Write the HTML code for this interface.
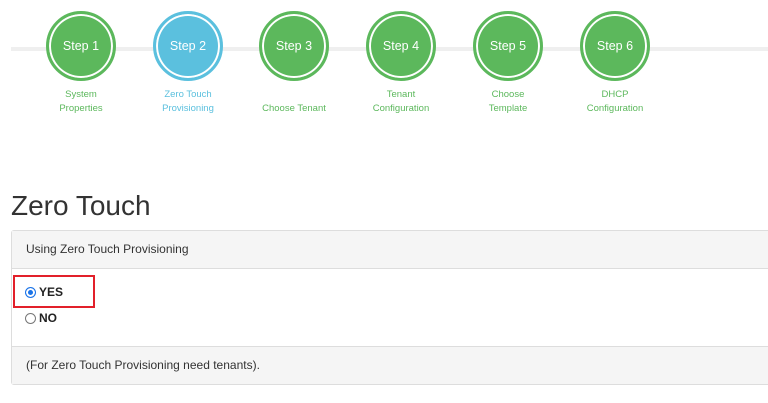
<!DOCTYPE html>
<html><head><style>
body{margin:0;width:768px;height:403px;background:#fff;font-family:"Liberation Sans",sans-serif;overflow:hidden;position:relative}
.line{position:absolute;left:11px;top:47px;width:757px;height:4px;background:#efefef}
.c{position:absolute;width:64px;height:64px;border-radius:50%;border:3px solid #5cb85c;box-shadow:inset 0 0 0 2px #fff;background:#5cb85c;color:#fff;font-size:12.5px;line-height:64px;text-align:center;top:11px}
.c.b{border-color:#5bc0de;background:#5bc0de}
.l{position:absolute;width:100px;text-align:center;font-size:9.5px;line-height:14px;color:#5cb85c;top:88px}
.l.b{color:#5bc0de}
h1{position:absolute;left:11px;top:190px;margin:0;font-size:28px;font-weight:normal;color:#333}
.p{position:absolute;left:11px;top:230px;width:770px;height:153px;border:1px solid #ddd;border-radius:3px}
.hd{height:37px;background:#f5f5f5;border-bottom:1px solid #ddd;font-size:12px;color:#333;line-height:37px;padding-left:14px}
.bd{height:77px}
.ft{height:37px;background:#f5f5f5;border-top:1px solid #ddd;font-size:12px;color:#333;line-height:37px;padding-left:14px}
.r{position:absolute;left:25px;font-size:12px;font-weight:bold;color:#222}
.rad{display:inline-block;width:11px;height:11px;border-radius:50%;border:1px solid #777;vertical-align:-2px;margin-right:3px;box-sizing:border-box}
.on{border:1px solid #1a73e8;background:#1a73e8;box-shadow:inset 0 0 0 2px #fff}
.red{position:absolute;left:13px;top:275px;width:78px;height:29px;border:2px solid #e2202a}
</style></head><body>
<div class="line"></div>
<div class="c" style="left:46px">Step 1</div>
<div class="c b" style="left:153px">Step 2</div>
<div class="c" style="left:259px">Step 3</div>
<div class="c" style="left:366px">Step 4</div>
<div class="c" style="left:473px">Step 5</div>
<div class="c" style="left:580px">Step 6</div>
<div class="l" style="left:31px">System<br>Properties</div>
<div class="l b" style="left:138px">Zero Touch<br>Provisioning</div>
<div class="l" style="left:244px"><br>Choose Tenant</div>
<div class="l" style="left:351px">Tenant<br>Configuration</div>
<div class="l" style="left:458px">Choose<br>Template</div>
<div class="l" style="left:565px">DHCP<br>Configuration</div>
<h1>Zero Touch</h1>
<div class="p"><div class="hd">Using Zero Touch Provisioning</div><div class="bd"></div><div class="ft">(For Zero Touch Provisioning need tenants).</div></div>
<div class="r" style="top:285px"><span class="rad on"></span>YES</div>
<div class="r" style="top:311px"><span class="rad"></span>NO</div>
<div class="red"></div>
</body></html>
